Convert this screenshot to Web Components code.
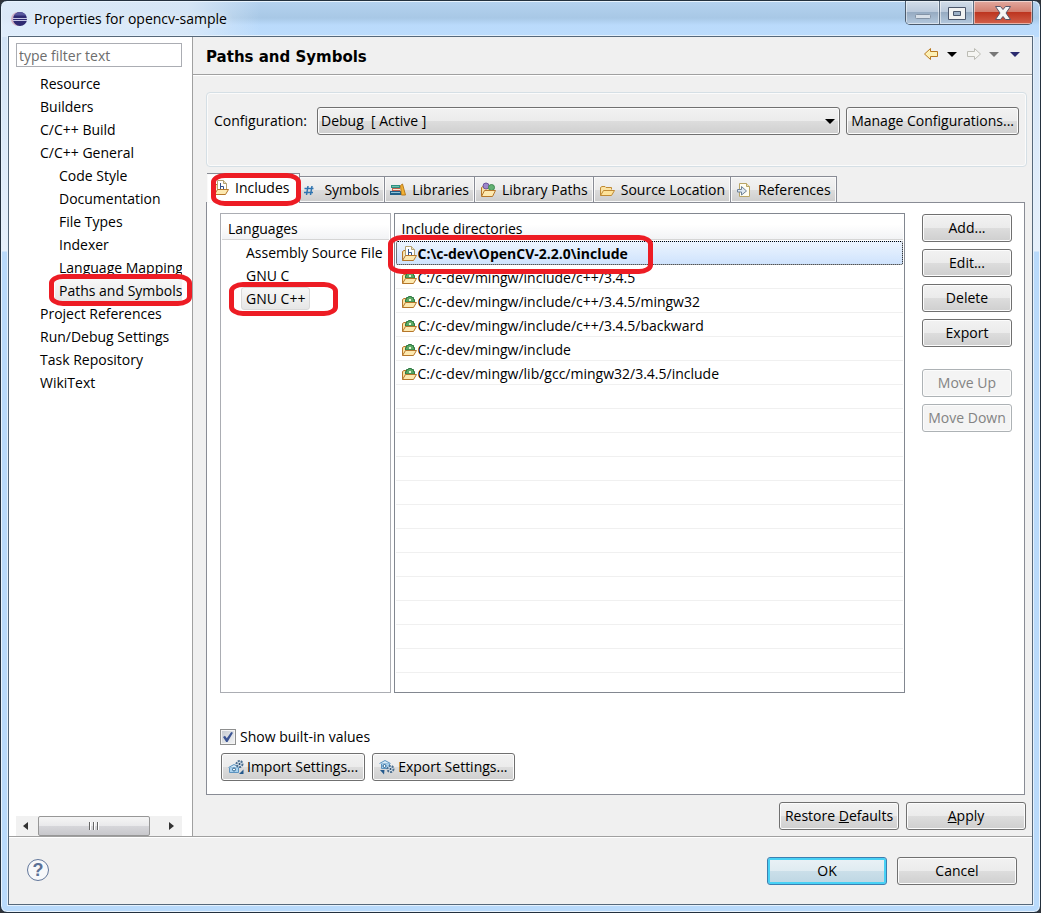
<!DOCTYPE html>
<html lang="en">
<head>
<meta charset="utf-8">
<title>Properties for opencv-sample</title>
<style>
  body {
    margin: 0;
    font: 14px/20px "Open Sans", "Noto Sans", sans-serif;
    color: #000;
    background: #30343a;
  }
</style>
</head>
<body>
<dialog-window caption="Properties for opencv-sample">
  <filter-tree slot="side">
    <tree-item>Resource</tree-item>
    <tree-item>Builders</tree-item>
    <tree-item>C/C++ Build</tree-item>
    <tree-item>C/C++ General</tree-item>
    <tree-item nested>Code Style</tree-item>
    <tree-item nested>Documentation</tree-item>
    <tree-item nested>File Types</tree-item>
    <tree-item nested>Indexer</tree-item>
    <tree-item nested>Language Mappings</tree-item>
    <tree-item nested selected>Paths and Symbols</tree-item>
    <tree-item>Project References</tree-item>
    <tree-item>Run/Debug Settings</tree-item>
    <tree-item>Task Repository</tree-item>
    <tree-item>WikiText</tree-item>
  </filter-tree>

  <page-header>Paths and Symbols</page-header>
  <config-group></config-group>
  <tab-folder>
    <tab-button slot="tabs" icon="include" active>Includes</tab-button>
    <tab-button slot="tabs" icon="hash">Symbols</tab-button>
    <tab-button slot="tabs" icon="books">Libraries</tab-button>
    <tab-button slot="tabs" icon="libpath">Library Paths</tab-button>
    <tab-button slot="tabs" icon="folder">Source Location</tab-button>
    <tab-button slot="tabs" icon="reference">References</tab-button>

    <list-panel slot="lists" heading="Languages">
      <language-item>Assembly Source File</language-item>
      <language-item>GNU C</language-item>
      <language-item selected>GNU C++</language-item>
    </list-panel>
    <list-panel slot="lists" heading="Include directories" lined>
      <directory-item icon="include" selected>C:\c-dev\OpenCV-2.2.0\include</directory-item>
      <directory-item icon="builtin">C:/c-dev/mingw/include/c++/3.4.5</directory-item>
      <directory-item icon="builtin">C:/c-dev/mingw/include/c++/3.4.5/mingw32</directory-item>
      <directory-item icon="builtin">C:/c-dev/mingw/include/c++/3.4.5/backward</directory-item>
      <directory-item icon="builtin">C:/c-dev/mingw/include</directory-item>
      <directory-item icon="builtin">C:/c-dev/mingw/lib/gcc/mingw32/3.4.5/include</directory-item>
    </list-panel>

    <push-button slot="actions">Add...</push-button>
    <push-button slot="actions">Edit...</push-button>
    <push-button slot="actions">Delete</push-button>
    <push-button slot="actions">Export</push-button>
    <push-button slot="moves" disabled>Move Up</push-button>
    <push-button slot="moves" disabled>Move Down</push-button>

    <check-field slot="footer">Show built-in values</check-field>
    <push-button slot="settings" icon="import">Import Settings...</push-button>
    <push-button slot="settings" icon="export">Export Settings...</push-button>
  </tab-folder>

  <push-button slot="page-actions">Restore <u>D</u>efaults</push-button>
  <push-button slot="page-actions"><u>A</u>pply</push-button>
  <push-button slot="dialog-actions" default>OK</push-button>
  <push-button slot="dialog-actions">Cancel</push-button>
</dialog-window>

<script>
const icons = {
  include: `
    <path d="M1.500 14.500V5.500L3 4.500h2" fill="#fbe3a4" stroke="#b5762a"/>
    <path d="M4.500 .500h6l3 3v8h-9z" fill="#fff" stroke="#b3a173"/>
    <path d="M10.500 .500v3h3" fill="#eadfb8" stroke="#b3a173"/>
    <path d="M7.500 3v6M7.500 6.500h3V9" fill="none" stroke="#34548a"/>
    <path d="M1.500 14.500L4.500 9.500H15.500L12.500 14.500z" fill="#fde9b0" stroke="#b5762a"/>`,
  hash: `<path d="M6 4L4.500 13M10 4L8.500 13M2.500 6.500h9M2 10.500h9" fill="none" stroke="#2f74b0" stroke-width="1.500"/>`,
  books: `
    <path d="M1 3h9v3H1z" fill="#2e8f80"/><path d="M2 4h7v1H2z" fill="#6fc0ae"/>
    <path d="M2 6h8v3H2z" fill="#c0604d"/><path d="M3 7h7v1H3z" fill="#f6e8d0"/>
    <path d="M0 9h11v4H0z" fill="#1f5f87"/><path d="M1 10h9v1H1z" fill="#8fc3d8"/>
    <path d="M10.500 3.500l2-1.500 3 11h-4z" fill="#f2b233" stroke="#b87a1e"/>`,
  libpath: `
    <path d="M1.500 14V5.500L3 4.500h9.500V8" fill="#fbe3a4" stroke="#b5762a"/>
    <circle cx="6" cy="4" r="3" fill="#9d86c8" stroke="#6e55a0"/>
    <circle cx="11.500" cy="5.500" r="3" fill="#63b173" stroke="#3f8a50"/>
    <path d="M1.500 14.500L4.500 8.500H15.500L12.500 14.500z" fill="#fde9b0" stroke="#b5762a"/>`,
  builtin: `
    <path d="M1.500 13.500V5.500L3 4.500h9.500V8" fill="#fbe3a4" stroke="#b5762a"/>
    <path d="M4.500 8V5.500h1v-2h2v-1h3v1h2v2h1V8z" fill="#5cab64" stroke="#2f7a44"/>
    <path d="M8 7V5h2v2z" fill="#e8f4da"/>
    <path d="M1.500 13.500L4.500 8.500H15.500L12.500 13.500z" fill="#fde9b0" stroke="#b5762a"/>`,
  folder: `
    <path d="M1.500 13.500V5.500L3 4.500h3l1 1h5.500v2" fill="#fbe3a4" stroke="#c08a34"/>
    <path d="M1.500 13.500L4.500 8.500H15.500L12.500 13.500z" fill="#fde39a" stroke="#c08a34"/>`,
  reference: `
    <path d="M3.500 1.500h7l3 3v10h-10z" fill="#fffdf2" stroke="#b9a566"/>
    <path d="M10.500 1.500v3h3" fill="#efe2b4" stroke="#b9a566"/>
    <path d="M1.500 7.500h4V4.500L10.500 9 5.500 13v-3h-4z" fill="#dfe9f3" stroke="#6f8298"/>`,
  import: `
    <path d="M1.500 8.500h9v5h-9z" fill="#a9d1ee" stroke="#5b93c0"/>
    <path d="M.500 8.500L6 5.500l5.500 3" fill="#d7ebf8" stroke="#5b93c0"/>
    <circle cx="6" cy="10.500" r="1.500" fill="#fff" stroke="#27618f"/>
    <circle cx="11.500" cy="5" r="3" fill="#d8e4ee" stroke="#4d6f90" stroke-width="2" stroke-dasharray="2 1"/>
    <circle cx="11.500" cy="5" r="1" fill="#27496a"/>
    <path d="M15.500 10.500v4.500H11z" fill="#24598c"/>`,
  export: `
    <path d="M2.500 4.500h8v5h-8z" fill="#a9d1ee" stroke="#5b93c0"/>
    <path d="M.500 4.500L6 1.500l5.500 3" fill="#d7ebf8" stroke="#5b93c0"/>
    <circle cx="5.500" cy="7" r="1.500" fill="#fff" stroke="#27618f"/>
    <circle cx="11.500" cy="10" r="3" fill="#d8e4ee" stroke="#4d6f90" stroke-width="2" stroke-dasharray="2 1"/>
    <circle cx="11.500" cy="10" r="1" fill="#27496a"/>
    <path d="M1 11h4.500L5 15.500z" fill="#24598c"/>`,
  eclipse: `
    <circle cx="7" cy="8" r="7" fill="#d3b3c6"/>
    <circle cx="9" cy="8" r="7" fill="#2f2a72"/>
    <path d="M3 4.500A7 7 0 0 1 15 4.500z" fill="#5a589f"/>
    <path d="M2 7.500h14M2 9.500h14" stroke="#c7c8e6"/>`,
  back: `<path d="M1.500 8L7.500 2.500v3h7v5h-7v3z" fill="#fdf0b4" stroke="#b9791f"/>`,
  forward: `<path d="M15.500 8L9.500 2.500v3h-7v5h7v3z" fill="#f5f5f2" stroke="#bcbcb4"/>`,
  arrow: `<path d="M3 6h10L8 11z" fill="currentColor"/>`
};

class UiIcon extends HTMLElement {
  constructor() {
    super();
    this.attachShadow({ mode: 'open' });
  }

  connectedCallback() {
    this.shadowRoot.innerHTML = `
      <style>
        :host { display: inline-block; flex: none; width: 16px; height: 16px; }
        svg { display: block; }
      </style>
      <svg width="16" height="16" viewBox="0 0 16 16" aria-hidden="true">${icons[this.getAttribute('name')] || ''}</svg>
    `;
  }
}

// Red marker drawn round its parent; size comes from the --ring inset.
class MarkerRing extends HTMLElement {
  constructor() {
    super();
    this.attachShadow({ mode: 'open' }).innerHTML = `
      <style>
        :host {
          position: absolute;
          inset: var(--ring, -4px);
          z-index: 3;
          border: 5px solid #ed1c24;
          border-radius: 14px / 9px;
          pointer-events: none;
        }
      </style>
    `;
  }
}

class PushButton extends HTMLElement {
  constructor() {
    super();
    this.attachShadow({ mode: 'open' });
  }

  connectedCallback() {
    const icon = this.getAttribute('icon');
    this.shadowRoot.innerHTML = `
      <style>
        :host { display: block; min-width: 90px; }
        button {
          display: flex;
          align-items: center;
          justify-content: center;
          gap: 3px;
          width: 100%;
          height: 28px;
          padding: 0 4px;
          font: inherit;
          color: #000;
          white-space: nowrap;
          border: 1px solid #707070;
          border-radius: 3px;
          background: linear-gradient(#f2f2f2, #ebebeb 50%, #dddddd 50%, #cfcfcf);
          box-shadow: inset 0 0 0 1px #fcfcfc;
        }
        :host([icon]) button { padding: 0 6px; }
        button:disabled {
          color: #838383;
          border-color: #adb2b5;
          background: #f4f4f4;
        }
        :host([default]) button {
          border-color: #3c7fb1;
          background: linear-gradient(#eaf2f6, #dfebf1 50%, #cbdfe9 50%, #bdd6e3);
          box-shadow: inset 0 0 0 2px #48d1f5;
        }
      </style>
      <button type="button" ${this.hasAttribute('disabled') ? 'disabled' : ''}>
        ${icon ? `<ui-icon name="${icon}"></ui-icon>` : ''}<span><slot></slot></span>
      </button>
    `;
  }
}

class DialogWindow extends HTMLElement {
  constructor() {
    super();
    this.attachShadow({ mode: 'open' });
  }

  connectedCallback() {
    this.shadowRoot.innerHTML = `
      <style>
        :host {
          display: flex;
          flex-direction: column;
          box-sizing: border-box;
          min-height: 100vh;
          padding: 0 7px 7px;
          border: 1px solid #23303e;
          border-radius: 7px;
          background:
            linear-gradient(90deg, rgba(232, 241, 251, .8), rgba(222, 235, 248, .8) 18%, rgba(190, 215, 242, 0) 25%) 0 0 / 100% 36px no-repeat,
            linear-gradient(#b5d2ef, #a8c8e6 17px, #badafb 24px, #bcdcfc 35px) 0 0 / 100% 36px no-repeat,
            linear-gradient(#cfe2f6, #e6f0fb 250px, #b9dafb 251px);
          box-shadow: inset 0 0 0 1px #e8f3fd;
        }
        header {
          display: flex;
          align-items: center;
          gap: 7px;
          height: 35px;
          padding-left: 3px;
        }
        h1 {
          flex: 1;
          margin: 0;
          font: inherit;
          text-shadow: 0 0 8px #fff;
        }
        .controls {
          display: flex;
          align-self: flex-start;
          border: 1px solid #4c5a6b;
          border-top: 0;
          border-radius: 0 0 5px 5px;
          overflow: hidden;
        }
        .controls button {
          display: grid;
          place-items: center;
          width: 34px;
          height: 23px;
          padding: 0;
          border: 0;
          border-right: 1px solid #5f6e80;
          background: linear-gradient(#d2dde9, #b9c8da 48%, #96abc2 50%, #b4c8dd);
          box-shadow: inset 0 0 0 1px rgba(255, 255, 255, .5);
        }
        .controls button:last-child {
          width: 58px;
          border: 0;
          background: linear-gradient(#e2a99f, #d27f70 46%, #bd3520 50%, #d2604a);
        }
        .client {
          flex: 1;
          display: flex;
          flex-direction: column;
          border: 1px solid #56687a;
          background: #f0f0f0;
          box-shadow: 0 0 0 1px #e4f1fd;
        }
        .body {
          flex: 1;
          display: grid;
          grid-template-columns: 184px minmax(0, 1fr);
          border-bottom: 1px solid #a0a0a0;
        }
        .page {
          display: flex;
          flex-direction: column;
        }
        .page-actions, .dialog-actions {
          display: flex;
          justify-content: flex-end;
          gap: 7px;
          padding: 7px 6px 6px;
        }
        .page-actions ::slotted(*), .dialog-actions ::slotted(*) { width: 120px; }
        .dialog-actions {
          gap: 10px;
          padding: 19px 15px 19px 18px;
          border-top: 1px solid #fff;
        }
        .help {
          width: 22px;
          height: 22px;
          margin: 2px auto 0 0;
          padding: 0;
          border: 1px solid #62779b;
          border-radius: 50%;
          background: #f7f8fa;
          color: #5b7196;
          font: bold 18px/20px "Liberation Sans", sans-serif;
        }
      </style>
      <header>
        <ui-icon name="eclipse"></ui-icon>
        <h1>${this.getAttribute('caption')}</h1>
        <div class="controls">
          <button type="button" aria-label="Minimize">
            <svg width="18" height="18"><rect x="1.500" y="10.500" width="15" height="4" rx="1" fill="#d8e0e9" stroke="#8393a6"/></svg>
          </button>
          <button type="button" aria-label="Maximize">
            <svg width="18" height="16"><path d="M.500 2.500h17v12h-17z" fill="#f2f2f2" stroke="#4b566b"/><path d="M5.500 6.500h7v4h-7z" fill="#9db0c6" stroke="#4b566b"/></svg>
          </button>
          <button type="button" aria-label="Close">
            <svg width="18" height="16"><path d="M1.500 1.500h5L9 4.500l2.500-3h5L12 8l4.500 6.500h-5L9 11.500l-2.500 3h-5L6 8z" fill="#f6f6f6" stroke="#57566a"/></svg>
          </button>
        </div>
      </header>
      <div class="client">
        <div class="body">
          <slot name="side"></slot>
          <div class="page">
            <slot></slot>
            <div class="page-actions"><slot name="page-actions"></slot></div>
          </div>
        </div>
        <div class="dialog-actions">
          <button class="help" type="button" aria-label="Help">?</button>
          <slot name="dialog-actions"></slot>
        </div>
      </div>
    `;
  }
}

class FilterTree extends HTMLElement {
  constructor() {
    super();
    this.attachShadow({ mode: 'open' }).innerHTML = `
      <style>
        :host {
          display: flex;
          flex-direction: column;
          padding: 6px 10px 0 7px;
          border-right: 1px solid #a0a0a0;
          background: #fff;
        }
        input {
          box-sizing: border-box;
          width: 100%;
          height: 24px;
          padding: 0 2px;
          font: inherit;
          border: 1px solid #abadb3;
          background: #fff;
        }
        input::placeholder { color: #6d6d6d; opacity: 1; }
        .items {
          flex: 1;
          padding-top: 5px;
        }
        .scroll {
          display: grid;
          grid-template-columns: 22px 112px 1fr;
          height: 20px;
          background: #f1f1f1;
        }
        .scroll span { display: grid; align-items: center; justify-content: center; }
        .scroll .left { justify-content: start; padding-left: 6px; }
        .scroll .right { justify-content: end; padding-right: 7px; }
        .thumb {
          border: 1px solid #979797;
          border-radius: 2px;
          background: linear-gradient(#f5f5f5, #e9e9eb 48%, #d6d6da 50%, #c8c8cc);
        }
      </style>
      <input type="text" placeholder="type filter text" aria-label="type filter text">
      <div class="items" role="tree"><slot></slot></div>
      <div class="scroll" aria-hidden="true">
        <span class="left"><svg width="6" height="10"><path d="M6 1v8L1 5z" fill="#333"/></svg></span>
        <span class="thumb"><svg width="12" height="10"><path d="M1.500 1v8M5.500 1v8M9.500 1v8" stroke="#666"/><path d="M2.500 1v8M6.500 1v8M10.500 1v8" stroke="#fff"/></svg></span>
        <span class="right"><svg width="6" height="10"><path d="M0 1v8L5 5z" fill="#333"/></svg></span>
      </div>
    `;
  }
}

class TreeItem extends HTMLElement {
  constructor() {
    super();
    this.attachShadow({ mode: 'open' });
  }

  connectedCallback() {
    this.setAttribute('role', 'treeitem');
    this.shadowRoot.innerHTML = `
      <style>
        :host {
          display: block;
          position: relative;
          height: 23px;
          margin-left: 20px;
        }
        :host([nested]) { margin-left: 39px; }
        span {
          display: block;
          padding-left: 4px;
          line-height: 23px;
          white-space: nowrap;
          overflow: hidden;
        }
        :host([selected]) span {
          background: linear-gradient(#f8f8f8, #e6e6e6);
        }
        marker-ring { --ring: -5px -10px -4px -6px; }
      </style>
      <span><slot></slot></span>
      ${this.hasAttribute('selected') ? '<marker-ring></marker-ring>' : ''}
    `;
  }
}

class PageHeader extends HTMLElement {
  constructor() {
    super();
    this.attachShadow({ mode: 'open' }).innerHTML = `
      <style>
        :host {
          display: flex;
          align-items: center;
          height: 37px;
          padding: 0 9px 0 13px;
          border-bottom: 1px solid #a0a0a0;
          box-shadow: 0 1px #fff;
        }
        h2 {
          flex: 1;
          margin: 0;
          font: bold 15px/22px "DejaVu Sans", sans-serif;
          padding-top: 2px;
        }
        button {
          display: block;
          padding: 0;
          border: 0;
          background: none;
        }
        nav { display: flex; gap: 5px; }
        .menu { color: #000; }
        .dim { color: #777; }
        .view { color: #2b2b6f; }
      </style>
      <h2><slot></slot></h2>
      <nav>
        <button type="button" aria-label="Back"><ui-icon name="back"></ui-icon></button>
        <button type="button" class="menu" aria-label="Back history"><ui-icon name="arrow"></ui-icon></button>
        <button type="button" aria-label="Forward"><ui-icon name="forward"></ui-icon></button>
        <button type="button" class="dim" aria-label="Forward history"><ui-icon name="arrow"></ui-icon></button>
        <button type="button" class="view" aria-label="View menu"><ui-icon name="arrow"></ui-icon></button>
      </nav>
    `;
  }
}

class ConfigGroup extends HTMLElement {
  constructor() {
    super();
    this.attachShadow({ mode: 'open' }).innerHTML = `
      <style>
        :host {
          display: flex;
          align-items: center;
          gap: 6px;
          margin: 17px 5px 6px 13px;
          padding: 14px 7px 31px;
          border: 1px solid #d5dfe5;
          border-radius: 4px;
          box-shadow: inset 0 0 0 1px #fbfbfb;
        }
        label { padding-right: 4px; }
        .pick {
          flex: 1;
          position: relative;
        }
        select {
          display: block;
          width: 100%;
          height: 28px;
          padding: 0 3px;
          font: inherit;
          color: #000;
          appearance: none;
          border: 1px solid #707070;
          border-radius: 3px;
          background: linear-gradient(#f2f2f2, #ebebeb 50%, #dddddd 50%, #cfcfcf);
          box-shadow: inset 0 0 0 1px #fcfcfc;
        }
        ui-icon {
          position: absolute;
          top: 6px;
          right: 2px;
          pointer-events: none;
        }
      </style>
      <label for="config">Configuration:</label>
      <div class="pick">
        <select id="config"><option>Debug&nbsp; [ Active ]</option></select>
        <ui-icon name="arrow"></ui-icon>
      </div>
      <push-button>Manage Configurations...</push-button>
    `;
  }
}

class TabFolder extends HTMLElement {
  constructor() {
    super();
    this.attachShadow({ mode: 'open' }).innerHTML = `
      <style>
        :host {
          flex: 1;
          display: flex;
          flex-direction: column;
          margin: 0 7px 0 13px;
        }
        .tabs {
          display: flex;
          align-items: flex-end;
          padding-left: 1px;
        }
        .sheet {
          flex: 1;
          display: flex;
          flex-direction: column;
          margin-top: -1px;
          padding: 10px 12px 13px 13px;
          border: 1px solid #898c95;
          background: #fff;
        }
        .work {
          flex: 1;
          display: flex;
          gap: 17px;
        }
        .lists {
          flex: 1;
          display: grid;
          grid-template-columns: 1fr 3fr;
          gap: 3px;
          min-width: 0;
        }
        .actions {
          display: flex;
          flex-direction: column;
          gap: 7px;
          padding-top: 1px;
        }
        .moves {
          display: flex;
          flex-direction: column;
          gap: 7px;
          margin-top: 15px;
        }
        .footer { margin: 34px 0 6px; }
        .settings { display: flex; gap: 7px; padding-left: 1px; }
      </style>
      <div class="tabs" role="tablist"><slot name="tabs"></slot></div>
      <div class="sheet">
        <div class="work">
          <div class="lists"><slot name="lists"></slot></div>
          <div class="actions">
            <slot name="actions"></slot>
            <div class="moves"><slot name="moves"></slot></div>
          </div>
        </div>
        <div class="footer"><slot name="footer"></slot></div>
        <div class="settings"><slot name="settings"></slot></div>
      </div>
    `;
  }
}

class TabButton extends HTMLElement {
  constructor() {
    super();
    this.attachShadow({ mode: 'open' });
  }

  connectedCallback() {
    const active = this.hasAttribute('active');
    this.shadowRoot.innerHTML = `
      <style>
        :host { display: block; position: relative; }
        :host([active]) { z-index: 1; margin-right: -3px; }
        button {
          display: flex;
          align-items: center;
          gap: 6px;
          height: 27px;
          padding: 0 5px;
          font: inherit;
          color: #000;
          white-space: nowrap;
          border: 1px solid #898c95;
          border-left-width: 0;
          background: linear-gradient(#f3f3f3, #ebebeb 50%, #dddddd 50%, #cdcdcd);
          box-shadow: inset 0 0 0 1px #fafafa;
        }
        :host([active]) button {
          height: 30px;
          padding: 0 10px 2px 6px;
          border-bottom: 0;
          background: #fff;
        }
        marker-ring { --ring: 0 -1px -3px 4px; }
      </style>
      <button type="button" role="tab" aria-selected="${active}">
        <ui-icon name="${this.getAttribute('icon')}"></ui-icon><slot></slot>
      </button>
      ${active ? '<marker-ring></marker-ring>' : ''}
    `;
  }
}

class ListPanel extends HTMLElement {
  constructor() {
    super();
    this.attachShadow({ mode: 'open' });
  }

  connectedCallback() {
    this.shadowRoot.innerHTML = `
      <style>
        :host {
          display: flex;
          flex-direction: column;
          min-width: 0;
          padding: 1px;
          border: 1px solid #abadb3;
          background: #fff;
        }
        :host([lined]) { border-color: #828790; }
        .heading {
          padding: 4px 6px 0;
          border-bottom: 1px solid #d5d5d5;
          background: linear-gradient(#fff 40%, #f2f3f5);
        }
        .rows {
          flex: 1;
          padding-top: 1px;
        }
        :host([lined]) .rows {
          background: repeating-linear-gradient(#fff 0 23px, #f0f0f0 23px 24px) 0 1px no-repeat;
        }
      </style>
      <div class="heading">${this.getAttribute('heading')}</div>
      <div class="rows"><slot></slot></div>
    `;
  }
}

class LanguageItem extends HTMLElement {
  constructor() {
    super();
    this.attachShadow({ mode: 'open' });
  }

  connectedCallback() {
    this.shadowRoot.innerHTML = `
      <style>
        :host {
          display: block;
          height: 23px;
          padding-left: 19px;
          line-height: 21px;
          white-space: nowrap;
        }
        .box {
          display: inline-block;
          position: relative;
          padding: 0 4px;
          border: 1px solid transparent;
        }
        :host([selected]) .box {
          border-color: #d9d9d9;
          border-radius: 3px;
          background: linear-gradient(#f8f8f8, #e6e6e6);
        }
        marker-ring { --ring: -6px -29px -7px -13px; }
      </style>
      <span class="box"><slot></slot>${this.hasAttribute('selected') ? '<marker-ring></marker-ring>' : ''}</span>
    `;
  }
}

class DirectoryItem extends HTMLElement {
  constructor() {
    super();
    this.attachShadow({ mode: 'open' });
  }

  connectedCallback() {
    this.shadowRoot.innerHTML = `
      <style>
        :host {
          display: flex;
          box-sizing: border-box;
          height: 24px;
          padding: 2px 4px 0;
          border: 1px solid transparent;
        }
        :host([selected]) {
          font-weight: bold;
          border: 1px dotted #000;
          border-radius: 2px;
          background: linear-gradient(#ecf4fe, #cfe3fd);
        }
        .box {
          display: flex;
          align-items: center;
          gap: 1px;
          position: relative;
        }
        marker-ring { --ring: -9px -25px -10px -13px; }
      </style>
      <span class="box">
        <ui-icon name="${this.getAttribute('icon')}"></ui-icon><slot></slot>
        ${this.hasAttribute('selected') ? '<marker-ring></marker-ring>' : ''}
      </span>
    `;
  }
}

class CheckField extends HTMLElement {
  constructor() {
    super();
    this.attachShadow({ mode: 'open' }).innerHTML = `
      <style>
        :host { display: block; }
        label { display: inline-flex; align-items: center; gap: 4px; }
        input {
          appearance: none;
          display: grid;
          place-items: center;
          width: 16px;
          height: 16px;
          margin: 0;
          border: 1px solid #8e8f8f;
          background: linear-gradient(135deg, #c4c9d0, #f4f5f6);
          box-shadow: inset 0 0 0 1px #f4f4f4;
        }
        input:checked::before {
          content: "";
          width: 10px;
          height: 10px;
          background: #3c5594;
          clip-path: polygon(0 50%, 20% 38%, 38% 62%, 82% 0, 100% 8%, 45% 100%, 32% 100%);
        }
      </style>
      <label><input type="checkbox" checked><slot></slot></label>
    `;
  }
}

customElements.define('ui-icon', UiIcon);
customElements.define('marker-ring', MarkerRing);
customElements.define('push-button', PushButton);
customElements.define('dialog-window', DialogWindow);
customElements.define('filter-tree', FilterTree);
customElements.define('tree-item', TreeItem);
customElements.define('page-header', PageHeader);
customElements.define('config-group', ConfigGroup);
customElements.define('tab-folder', TabFolder);
customElements.define('tab-button', TabButton);
customElements.define('list-panel', ListPanel);
customElements.define('language-item', LanguageItem);
customElements.define('directory-item', DirectoryItem);
customElements.define('check-field', CheckField);
</script>
</body>
</html>
